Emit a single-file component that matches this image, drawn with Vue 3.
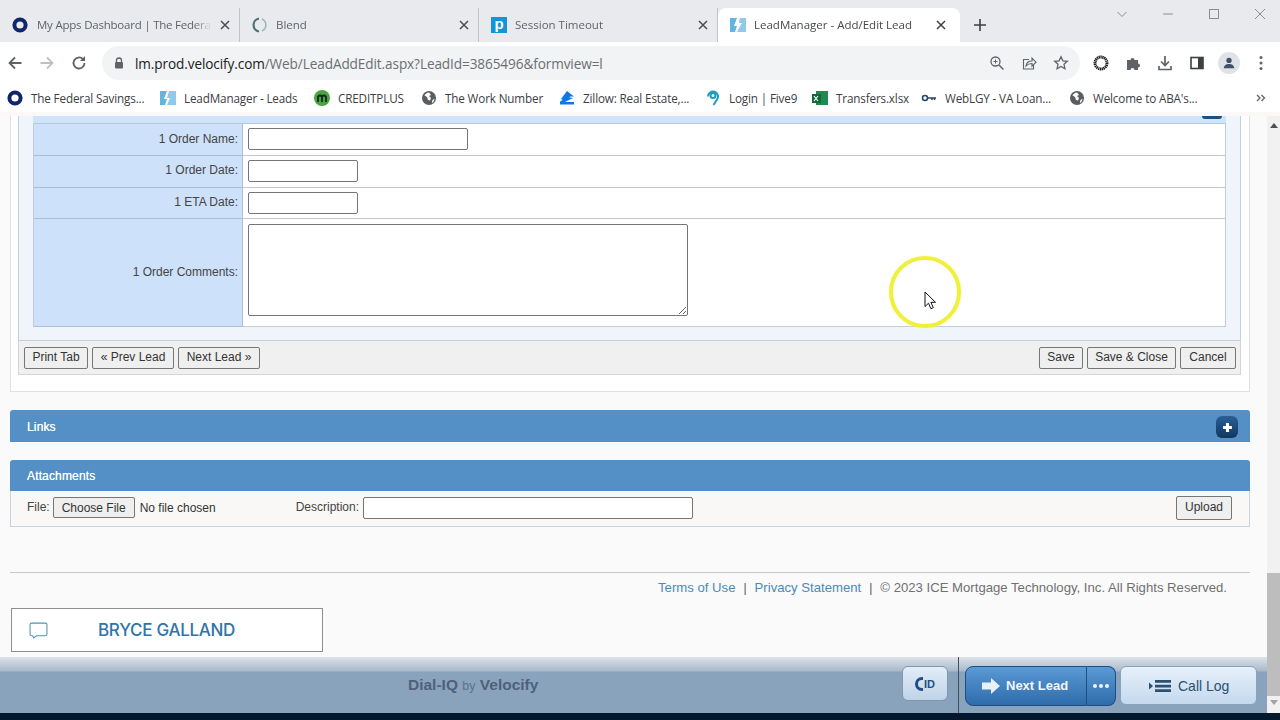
<script setup>
const tabs = [
  { title: 'My Apps Dashboard | The Federa', icon: 'okta', w: 240 },
  { title: 'Blend', icon: 'blend', w: 239 },
  { title: 'Session Timeout', icon: 'p', w: 239 },
]
const bookmarks = [
  { t: 'The Federal Savings...', i: 'okta', w: 153 },
  { t: 'LeadManager - Leads', i: 'lm', w: 154 },
  { t: 'CREDITPLUS', i: 'm', w: 107 },
  { t: 'The Work Number', i: 'globe', w: 138 },
  { t: 'Zillow: Real Estate,...', i: 'z', w: 146 },
  { t: 'Login | Five9', i: 'five9', w: 107 },
  { t: 'Transfers.xlsx', i: 'x', w: 109 },
  { t: 'WebLGY - VA Loan...', i: 'key', w: 148 },
  { t: "Welcome to ABA's...", i: 'globe', w: 150 },
]
const rows = [
  { label: '1 Order Name:', cls: 'f-name', h: 32 },
  { label: '1 Order Date:', cls: 'f-date', h: 32 },
  { label: '1 ETA Date:', cls: 'f-date', h: 31 },
]
</script>

<template>
  <div class="screen">
    <div class="tabbar">
      <div v-for="(tab, n) in tabs" :key="n" class="tab" :style="{ width: tab.w + 'px' }">
        <svg v-if="tab.icon === 'okta'" class="fav" viewBox="0 0 16 16"><circle cx="8" cy="8" r="5.6" fill="none" stroke="#10266b" stroke-width="4"/></svg>
        <svg v-else-if="tab.icon === 'blend'" class="fav" viewBox="0 0 16 16"><path d="M7 1.5A6.6 6.6 0 0 0 7 14.5" fill="none" stroke="#4f6f76" stroke-width="2.2"/><path d="M10 2a6.6 6.6 0 0 1 0 12" fill="none" stroke="#9db8bd" stroke-width="1.6"/></svg>
        <span v-else class="fav p-fav">p</span>
        <span class="tab-title">{{ tab.title }}</span>
        <svg class="tab-x" viewBox="0 0 10 10"><path d="M1 1l8 8M9 1l-8 8" stroke="#4a4d51" stroke-width="1.5"/></svg>
      </div>
      <div class="tab active">
        <svg class="fav" viewBox="0 0 16 16"><path d="M0 1h7L4 9h3l-2 6H0z" fill="#62b5de"/><path d="M9 1h7v14H7l3-7H7z" fill="#8fcbe8"/><path d="M10 0L5 9h3l-2 7 6-10H9z" fill="#fff"/></svg>
        <span class="tab-title dark">LeadManager - Add/Edit Lead</span>
        <svg class="tab-x" viewBox="0 0 10 10"><path d="M1 1l8 8M9 1l-8 8" stroke="#3c4043" stroke-width="1.5"/></svg>
      </div>
      <svg class="new-tab" viewBox="0 0 14 14"><path d="M7 1v12M1 7h12" stroke="#3c4043" stroke-width="1.6"/></svg>
      <div class="win-ctl">
        <svg viewBox="0 0 12 12" class="wc"><path d="M1.5 4l4.5 4.5L10.500 4" fill="none" stroke="#8b8d90"/></svg>
        <svg viewBox="0 0 12 12" class="wc"><path d="M1 6h10" stroke="#8b8d90"/></svg>
        <svg viewBox="0 0 12 12" class="wc"><rect x="1.500" y="1.500" width="9" height="9" fill="none" stroke="#8b8d90"/></svg>
        <svg viewBox="0 0 12 12" class="wc"><path d="M1 1l10 10M11 1L1 11" stroke="#8b8d90"/></svg>
      </div>
    </div>

    <div class="toolbar">
      <svg class="nav" viewBox="0 0 16 16"><path d="M14.500 8H2.500M8 2.500L2.500 8 8 13.500" fill="none" stroke="#5f6368" stroke-width="1.800"/></svg>
      <svg class="nav" viewBox="0 0 16 16"><path d="M1.500 8h12M8 2.500L13.500 8 8 13.500" fill="none" stroke="#bdc1c6" stroke-width="1.800"/></svg>
      <svg class="nav" viewBox="0 0 16 16"><path d="M13.500 8A5.500 5.500 0 1 1 11.800 4" fill="none" stroke="#5f6368" stroke-width="1.800"/><path d="M14 1v5H9z" fill="#5f6368"/></svg>
      <div class="omnibox">
        <svg class="lock" viewBox="0 0 10 12"><path d="M2.500 5V3.500a2.500 2.500 0 0 1 5 0V5" fill="none" stroke="#5f6368" stroke-width="1.300"/><rect x="1" y="5" width="8" height="6.500" rx="1" fill="#5f6368"/></svg>
        <span class="url"><b>lm.prod.velocify.com</b>/Web/LeadAddEdit.aspx?LeadId=3865496&amp;formview=l</span>
        <svg class="omni-i" viewBox="0 0 16 16"><circle cx="6.500" cy="6.500" r="4.500" fill="none" stroke="#5f6368" stroke-width="1.300"/><path d="M10 10l4.500 4.500" stroke="#5f6368" stroke-width="1.500"/><path d="M4.500 6.500h4M6.500 4.500v4" stroke="#5f6368"/></svg>
        <svg class="omni-i" viewBox="0 0 16 16"><path d="M8 4.500H2.500v9.500h10V10" fill="none" stroke="#5f6368" stroke-width="1.100"/><path d="M5 11c.5-3.500 3-5 6-5V3l4 4.200-4 4V8.500c-2.500 0-4.500.7-6 2.500z" fill="none" stroke="#5f6368" stroke-width="1.100"/></svg>
        <svg class="omni-i last" viewBox="0 0 16 16"><path d="M8 1.800l1.900 4 4.400.5-3.300 3 .9 4.400L8 11.500l-3.900 2.200.9-4.400-3.300-3 4.400-.5z" fill="none" stroke="#5f6368" stroke-width="1.300"/></svg>
      </div>
      <svg class="ext" viewBox="0 0 16 16"><circle cx="8" cy="8" r="6" fill="none" stroke="#222" stroke-width="3" stroke-dasharray="1.300 .5"/><circle cx="8" cy="8" r="4" fill="#fff"/></svg>
      <svg class="ext" viewBox="0 0 16 16"><path d="M2 5h3.500a2 2 0 0 1 4 0H13v3.500a2 2 0 0 1 0 4V15H9.500a2 2 0 0 0-4 0H2z" fill="#5f6368"/></svg>
      <svg class="ext" viewBox="0 0 16 16"><path d="M8 1v9M4 6.500L8 10.500l4-4M2 11v3.500h12V11" fill="none" stroke="#5f6368" stroke-width="1.700"/></svg>
      <svg class="ext" viewBox="0 0 16 16"><rect x="2" y="2.500" width="12" height="11" fill="none" stroke="#3c4043" stroke-width="1.600"/><rect x="9" y="2.500" width="5" height="11" fill="#3c4043"/></svg>
      <span class="avatar"><svg viewBox="0 0 16 16"><circle cx="8" cy="5" r="3" fill="#3f5068"/><path d="M2 14c0-3.500 3-5 6-5s6 1.500 6 5z" fill="#3f5068"/></svg></span>
      <svg class="kebab" viewBox="0 0 4 16"><circle cx="2" cy="2.500" r="1.500" fill="#5f6368"/><circle cx="2" cy="8" r="1.500" fill="#5f6368"/><circle cx="2" cy="13.500" r="1.500" fill="#5f6368"/></svg>
    </div>

    <div class="bookmarks">
      <div v-for="(b, n) in bookmarks" :key="n" class="bm" :style="{ width: b.w + 'px' }">
        <svg v-if="b.i === 'okta'" class="bm-i" viewBox="0 0 16 16"><circle cx="8" cy="8" r="5.600" fill="none" stroke="#10266b" stroke-width="4"/></svg>
        <svg v-else-if="b.i === 'lm'" class="bm-i" viewBox="0 0 16 16"><path d="M0 1h7L4 9h3l-2 6H0z" fill="#62b5de"/><path d="M9 1h7v14H7l3-7H7z" fill="#8fcbe8"/></svg>
        <svg v-else-if="b.i === 'm'" class="bm-i" viewBox="0 0 16 16"><circle cx="8" cy="8" r="8" fill="#4aa63c"/><path d="M4 12V6.500c1.500-1.500 3-1 4 0 1-1 2.500-1.500 4 0V12M8 6.500V12" fill="none" stroke="#10202a" stroke-width="1.700"/></svg>
        <svg v-else-if="b.i === 'globe'" class="bm-i" viewBox="0 0 16 16"><circle cx="8" cy="8" r="7" fill="#5a5d60"/><path d="M8 2.500c-2 0-4 1.500-4.500 3L6 7l1 3 2 .5 1-2.500-2-2 2-1zM11 11l1.500-2 1 .5c-.5 1.500-1 2.500-2.500 3.500z" fill="#fff"/></svg>
        <svg v-else-if="b.i === 'z'" class="bm-i" viewBox="0 0 16 16"><path d="M8 1l7 5.500h-3.500L5 10.500 2 9z" fill="#1277e1"/><path d="M1 14.500v-3L8.500 7 14 8 6 12h9v2.500z" fill="#1277e1"/></svg>
        <svg v-else-if="b.i === 'five9'" class="bm-i" viewBox="0 0 16 16"><circle cx="8" cy="5.500" r="2.500" fill="none" stroke="#1b9dbd" stroke-width="2"/><path d="M3 6.500a5 5 0 1 1 9 3L8.500 15" fill="none" stroke="#1b9dbd" stroke-width="2"/></svg>
        <svg v-else-if="b.i === 'x'" class="bm-i" viewBox="0 0 16 16"><rect x="4" y="1" width="12" height="14" fill="#1d8a4e"/><rect x="0" y="4" width="9" height="9" fill="#0f6a38"/><path d="M2 6l4 5M6 6l-4 5" stroke="#fff" stroke-width="1.200"/></svg>
        <svg v-else class="bm-i" viewBox="0 0 16 16"><circle cx="4" cy="8" r="2.500" fill="none" stroke="#27486a" stroke-width="1.600"/><path d="M6.500 8H15M11 8v2M13.500 8v2" stroke="#27486a" stroke-width="1.500"/></svg>
        <span class="bm-t">{{ b.t }}</span>
      </div>
      <svg class="bm-more" viewBox="0 0 10 10"><path d="M1 2l3 3-3 3M5.500 2l3 3-3 3" fill="none" stroke="#5f6368" stroke-width="1.300"/></svg>
    </div>

    <div class="viewport">
      <div class="app-col">
        <div class="page">
          <section class="outer">
            <div class="inner">
              <div class="strip"><span class="strip-btn"></span></div>
              <div class="table">
                <div v-for="r in rows" :key="r.label" class="row" :style="{ height: r.h + 'px' }">
                  <div class="lab">{{ r.label }}</div>
                  <div class="val"><input class="field" :class="r.cls" type="text" /></div>
                </div>
                <div class="row tall">
                  <div class="lab">1 Order Comments:</div>
                  <div class="val top"><textarea class="comments"></textarea></div>
                </div>
              </div>
            </div>
            <div class="actions">
              <button class="btn w64">Print Tab</button>
              <button class="btn w82">« Prev Lead</button>
              <button class="btn w82">Next Lead »</button>
              <span class="spring"></span>
              <button class="btn w44">Save</button>
              <button class="btn w89">Save &amp; Close</button>
              <button class="btn w56">Cancel</button>
            </div>
          </section>

          <section class="blue links">
            <span>Links</span>
            <span class="plus"><svg viewBox="0 0 10 10"><path d="M5 1v8M1 5h8" stroke="#fff" stroke-width="2.800"/></svg></span>
          </section>

          <section class="attach">
            <div class="blue att-head"><span>Attachments</span></div>
            <div class="att-body">
              <span class="file-l">File:</span>
              <button class="btn choose">Choose File</button>
              <span class="nofile">No file chosen</span>
              <span class="file-l desc">Description:</span>
              <input class="field f-desc" type="text" />
              <span class="spring"></span>
              <button class="btn upload">Upload</button>
            </div>
          </section>

          <footer class="legal">
            <a>Terms of Use</a><i>|</i><a>Privacy Statement</a><i>|</i><span>© 2023 ICE Mortgage Technology, Inc. All Rights Reserved.</span>
          </footer>

          <div class="chat">
            <svg class="chat-i" viewBox="0 0 18 16"><path d="M2.500 1h13a1.500 1.500 0 0 1 1.500 1.500v9a1.500 1.500 0 0 1-1.500 1.500H7l-2.500 2-1-2h-1A1.500 1.500 0 0 1 1 11.500v-9A1.500 1.500 0 0 1 2.500 1z" fill="none" stroke="#4f93b5" stroke-width="1"/></svg>
            <span>BRYCE GALLAND</span>
          </div>
        </div>

        <div class="dial">
          <div class="brand"><b>Dial-IQ</b> <em>by</em> <b>Velocify</b></div>
          <button class="cid"><b class="cid-c"></b><span>ID</span></button>
          <span class="dial-sep"></span>
          <button class="next">
            <svg viewBox="0 0 18 16"><path d="M0 4.500h9V0l9 8-9 8v-4.500H0z" fill="#e8f0f8"/></svg>
            <span>Next Lead</span>
          </button>
          <button class="dots"><i></i><i></i><i></i></button>
          <button class="calllog">
            <svg viewBox="0 0 22 14"><path d="M0 3.500L4 7 0 10.500z" fill="#2c4f72"/><path d="M6 1h16v2.700H6zM6 5.700h16v2.700H6zM6 10.300h16V13H6z" fill="#2c4f72"/></svg>
            <span>Call Log</span>
          </button>
        </div>
      </div>

      <div class="scroll">
        <svg class="arr up" viewBox="0 0 8 5"><path d="M4 0l4 5H0z" fill="#505050"/></svg>
        <div class="thumb"></div>
        <svg class="arr down" viewBox="0 0 8 5"><path d="M4 5L8 0H0z" fill="#a3a3a3"/></svg>
      </div>

      <div class="spot"></div>
      <svg class="pointer" viewBox="0 0 12 19"><path d="M1 1v14.500l3.500-3.300 2.400 5.500 2.400-1-2.400-5.400H11.500z" fill="#fff" stroke="#111" stroke-width="1"/></svg>
    </div>

    <div class="taskstrip"></div>
  </div>
</template>

<style scoped>
.screen { width: 1280px; height: 720px; display: flex; flex-direction: column; overflow: hidden; font-family: "Liberation Sans", Arial, sans-serif; background: #fff; }
.tabbar { height: 42px; flex: none; background: #e8eaed; display: flex; align-items: flex-end; position: relative; }
.tab { height: 34px; display: flex; align-items: center; padding: 0 9px 1px 12px; box-sizing: border-box; border-right: 1px solid #bfc2c6; font: 11.500px "Open Sans", sans-serif; color: #5f6368; }
.tab.active { width: 242px; background: #fff; border: 0; border-radius: 8px 8px 0 0; padding: 0 14px 1px 12px; }
.fav { width: 16px; height: 16px; flex: none; margin-right: 8px; }
.tab:first-child .fav { margin-right: 9px; }
.tab:first-child .tab-title { letter-spacing: -0.22px; }
.p-fav { background: #1295d8; color: #fff; font: bold 15px/14px "Liberation Sans", sans-serif; text-align: center; }
.tab-title { flex: 1; white-space: nowrap; overflow: hidden; -webkit-mask-image: linear-gradient(to left, transparent, #000 18px); mask-image: linear-gradient(to left, transparent, #000 18px); }
.tab-title.dark { color: #45484c; }
.tab-x { width: 10px; height: 10px; margin-left: 8px; flex: none; }
.new-tab { width: 14px; height: 14px; margin: 0 0 10px 13px; }
.win-ctl { position: absolute; right: 0; top: 8px; display: flex; }
.wc { width: 12px; height: 12px; margin-right: 34px; }
.wc:last-child { margin-right: 14px; }
.toolbar { height: 42px; flex: none; background: #fff; display: flex; align-items: center; padding-left: 7px; }
.nav { width: 16px; height: 16px; margin-right: 16px; flex: none; }
.omnibox { width: 978px; height: 34px; margin-left: -1px; border-radius: 17px; background: #f1f3f4; display: flex; align-items: center; padding-left: 12px; box-sizing: border-box; }
.lock { width: 10px; height: 12px; margin-right: 11px; flex: none; }
.url { flex: 1; font: 13.600px "Open Sans", sans-serif; color: #6b6f73; white-space: nowrap; letter-spacing: -0.1px; }
.url b { font-weight: 400; color: #202124; }
.omni-i { width: 16px; height: 16px; margin-right: 16px; flex: none; }
.omni-i.last { margin-right: 11px; }
.ext { width: 16px; height: 16px; margin-left: 13px; margin-right: 3px; flex: none; }
.avatar { width: 22px; height: 22px; border-radius: 50%; background: #dfe2e6; margin-left: 10px; display: flex; align-items: center; justify-content: center; flex: none; }
.avatar svg { width: 14px; height: 14px; }
.kebab { width: 4px; height: 16px; margin-left: 19px; flex: none; }
.bookmarks { height: 28px; flex: none; background: #fff; display: flex; align-items: center; padding: 0 0 0 7px; position: relative; }
.bm { display: flex; align-items: center; flex: none; font: 11.700px "Open Sans", sans-serif; color: #3c4043; white-space: nowrap; }
.bm-i { width: 16px; height: 16px; margin-right: 8px; flex: none; }
.bm-t { letter-spacing: -0.15px; }
.bm-more { position: absolute; right: 14px; top: 9px; width: 10px; height: 10px; }
.viewport { flex: 1; min-height: 0; display: flex; position: relative; border-top: 4px solid #fbf9f7; box-sizing: border-box; }
.app-col { flex: 1; min-width: 0; display: flex; flex-direction: column; }
.page { flex: 1; min-height: 0; overflow: hidden; background: #fafafa; padding: 0 17px 0 10px; }
.outer { background: #fff; border: 1px solid #dde2e6; border-top: 0; height: 276px; box-sizing: border-box; padding: 0 8px 0 7px; }
.inner { background: #f0f5fb; border: 1px solid #c3d1df; border-top: 0; height: 225px; box-sizing: border-box; padding: 0 14px 0 14px; }
.strip { height: 7px; background: #cfe3fa; position: relative; }
.strip-btn { position: absolute; right: 4px; top: 0; width: 20px; height: 3px; background: #1f4f80; border-radius: 0 0 5px 5px; }
.table { border: 1px solid #c3ccd6; border-top: 1px solid #b9c8d8; border-bottom: 1px solid #c3ccd6; background: #fff; }
.row { display: flex; border-bottom: 1px solid #c4c8cc; box-sizing: border-box; }
.row.tall { height: 107px; border-bottom: 0; }
.lab { width: 209px; flex: none; box-sizing: border-box; background: #cee1fa; border-right: 1px solid #a9bdd3; border-bottom: 1px solid #a9bdd3; margin-bottom: -1px; padding: 0 4px 2px 0; display: flex; align-items: center; justify-content: flex-end; font-size: 12px; color: #444; }
.row:nth-child(2) .lab { padding-bottom: 4px; }
.val { padding: 4px 0 0 5px; }
.val.top { padding-top: 5px; }
.field { display: block; box-sizing: border-box; height: 22px; background: #fff; border: 1px solid #767676; border-radius: 2px; padding: 0 2px; margin: 0; }
.f-name { width: 220px; }
.f-date { width: 110px; }
.f-desc { width: 330px; }
.comments { display: block; box-sizing: border-box; width: 440px; height: 92px; margin: 0; border: 1px solid #767676; border-radius: 2px; background: #fff; resize: both; }
.actions { height: 34px; box-sizing: border-box; background: #f0f0f0; border: 1px solid #d3d6d9; border-top: 0; display: flex; align-items: center; gap: 4px; padding: 0 4px 0 5px; }
.spring { flex: 1; }
.btn { height: 22px; box-sizing: border-box; padding: 0 0 2px; background: #efefef; border: 1px solid #767676; border-radius: 2px; font: 12px "Liberation Sans", sans-serif; color: #333; flex: none; }
.w64 { width: 64px; } .w82 { width: 82px; } .w44 { width: 44px; } .w89 { width: 89px; } .w56 { width: 56px; }
.blue { background: #5490c6; color: #fff; font-size: 12px; font-weight: 400; letter-spacing: 0.15px; text-shadow: 0 0 0.6px #fff; display: flex; align-items: center; justify-content: space-between; padding: 0 12px 0 17px; box-sizing: border-box; }
.links { height: 32px; margin-top: 18px; border-radius: 3px 3px 0 0; padding-top: 1px; }
.plus { width: 22px; height: 22px; border-radius: 6px; margin-top: 1px; background: linear-gradient(#2a5f96, #10365f); display: flex; align-items: center; justify-content: center; }
.plus svg { width: 11px; height: 11px; }
.attach { margin-top: 18px; }
.att-head { height: 31px; border-radius: 3px 3px 0 0; }
.att-body { height: 36px; box-sizing: border-box; background: #faf8f6; border: 1px solid #c7d4e0; border-top: 0; display: flex; align-items: center; padding: 0 34px 2px 16px; font-size: 12px; color: #444; }
.file-l { margin-top: -2px; }
.choose { width: 82px; height: 21px; margin-left: 3px; padding-bottom: 0; }
.nofile { margin-left: 5px; color: #333; width: 156px; }
.desc { margin-right: 4px; }
.upload { width: 56px; height: 24px; margin-right: -17px; }
.legal { height: 36px; margin-top: 45px; box-sizing: border-box; border-top: 1px solid #c8c8c8; display: flex; justify-content: flex-end; align-items: center; padding: 0 23px 6px 0; font-size: 13.150px; color: #707070; }
.legal a { color: #4a8ab9; }
.legal i { font-style: normal; margin: 0 8px; color: #555; font-size: 12px; }
.chat { width: 312px; height: 44px; box-sizing: border-box; margin: 0 0 0 1px; background: #fff; border: 1px solid #8f8f8f; display: flex; align-items: center; padding-left: 17px; color: #2f73aa; font-size: 17px; font-family: Inter, "Liberation Sans", sans-serif; font-weight: 500; letter-spacing: -0.3px; }
.chat-i { width: 19px; height: 17px; margin-right: 50px; flex: none; }
.dial { height: 56px; flex: none; background: linear-gradient(#dde3ea 0, #a8b9cb 14px, #8aa3bd 15px); display: flex; align-items: flex-start; position: relative; padding-left: 408px; }
.brand { width: 494px; padding-top: 19px; font-size: 15.500px; color: #4f6179; flex: none; box-sizing: border-box; }
.brand b { font-weight: 700; }
.brand em { font-style: normal; font-size: 12.500px; color: #5f7086; }
.cid { width: 46px; height: 35px; margin-top: 9px; box-sizing: border-box; padding: 0; border: 1px solid #7f98b2; border-radius: 6px; background: linear-gradient(#e2edf7, #bfd3e8); color: #1f4f82; font: bold 11px "Liberation Sans", sans-serif; display: flex; align-items: center; justify-content: center; }
.cid-c { width: 8px; height: 14px; box-sizing: border-box; border: 3px solid #1f4f82; border-right: 0; border-radius: 7px 0 0 7px; margin-right: 1px; }
.dial-sep { width: 1px; height: 56px; background: #3e4f61; margin: 0 6px 0 10px; flex: none; }
.next { width: 122px; height: 40px; margin-top: 9px; box-sizing: border-box; padding: 0 0 2px 16px; border: 1px solid #1c4f84; border-radius: 8px 0 0 8px; background: linear-gradient(#5a9ad5, #2f6bab); color: #f2f6fb; font: bold 13px "Liberation Sans", sans-serif; display: flex; align-items: center; }
.next svg { width: 18px; height: 16px; margin: 2px 6px 0 0; }
.dots { width: 29px; height: 40px; margin-top: 9px; box-sizing: border-box; padding: 0; border: 1px solid #1c4f84; border-left: 0; border-radius: 0 8px 8px 0; background: linear-gradient(#5a9ad5, #2f6bab); display: flex; align-items: center; justify-content: center; gap: 2px; }
.dots i { width: 4px; height: 4px; background: #eef3f9; border-radius: 50%; }
.calllog { width: 137px; height: 39px; margin: 9px 0 0 4px; box-sizing: border-box; padding: 0 0 0 28px; border: 1px solid #8aa3bd; border-radius: 6px; background: linear-gradient(#e6f0fa, #c4d9ee); color: #2c4f72; font: 14px "Liberation Sans", sans-serif; display: flex; align-items: center; }
.calllog svg { width: 22px; height: 14px; margin-right: 7px; }
.scroll { width: 13px; flex: none; background: #f1f1f1; display: flex; flex-direction: column; align-items: center; }
.arr { width: 8px; height: 5px; flex: none; }
.up { margin-top: 7px; }
.thumb { width: 13px; height: 123px; background: #bdbdbd; margin-top: 445px; flex: none; }
.down { margin-top: 4px; }
.spot { position: absolute; left: 889px; top: 140px; width: 72px; height: 72px; box-sizing: border-box; border: 4px solid #f0f03c; border-radius: 50%; box-shadow: 0 0 2px #f6f68c; }
.pointer { position: absolute; left: 924px; top: 175px; width: 12px; height: 19px; }
.taskstrip { height: 7px; flex: none; background: #03182c; }
</style>

<style>
html, body { margin: 0; padding: 0; background: #fff; }
</style>
